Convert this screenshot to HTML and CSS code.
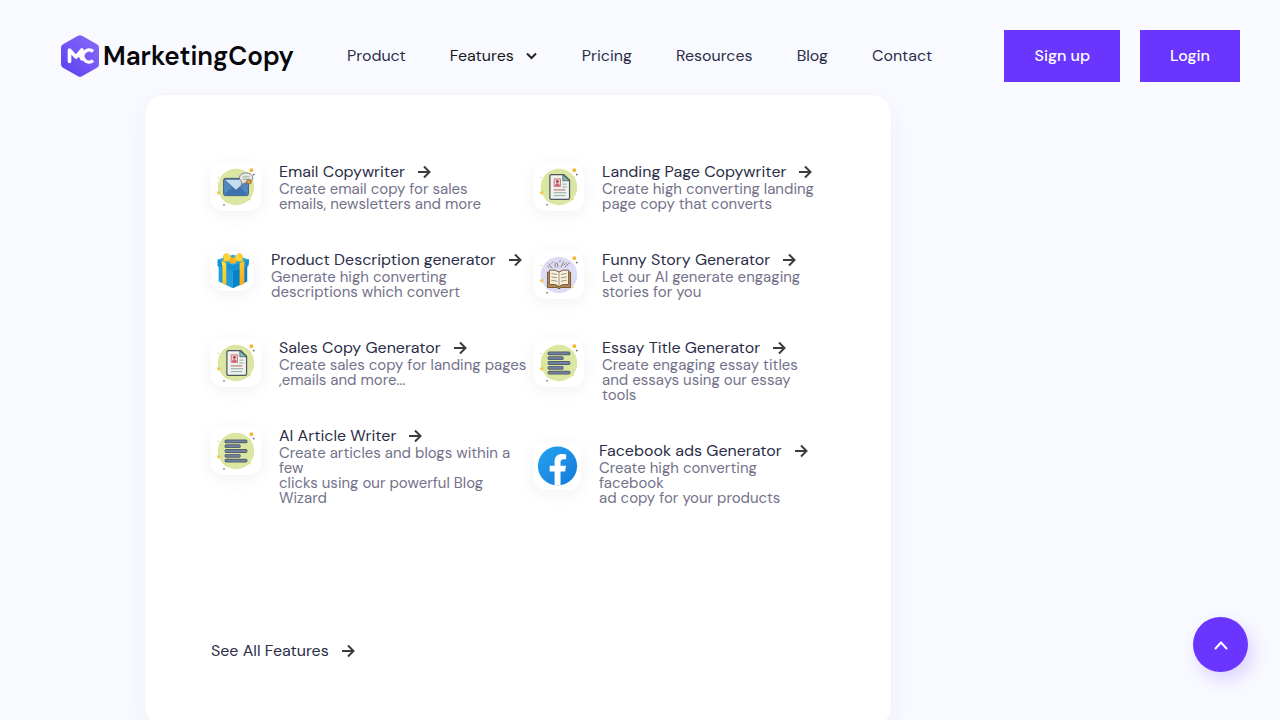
FILE: index.html
```html
<!DOCTYPE html>
<html lang="en">
<head>
<meta charset="utf-8">
<meta name="viewport" content="width=device-width, initial-scale=1">
<title>MarketingCopy</title>
<link rel="stylesheet" href="styles.css">
</head>
<body>
<svg class="sprite" aria-hidden="true">
  <defs>
    <linearGradient id="brand" x1="0" y1="1" x2="1" y2="0"><stop offset="0" stop-color="#5a3ff0"/><stop offset="1" stop-color="#8b6cf8"/></linearGradient>
    <linearGradient id="fb" x1="0" y1="0" x2="1" y2="1"><stop offset="0" stop-color="#24a4ee"/><stop offset="1" stop-color="#1478dc"/></linearGradient>
    <linearGradient id="ribbon" x1="0" y1="0" x2="1" y2="1"><stop offset="0" stop-color="#ffe33c"/><stop offset="1" stop-color="#f8a51b"/></linearGradient>
  </defs>
  <symbol id="arrow" viewBox="0 0 14 14"><path d="M1 7h11M7 1.500 12.500 7 7 12.500" fill="none" stroke="#3c3c40" stroke-width="2"/></symbol>
  <symbol id="dots" viewBox="0 0 50 50">
    <circle cx="41" cy="7.500" r="2" fill="#f2b632"/><circle cx="7" cy="31" r="1.800" fill="#f3c84c"/><circle cx="43.500" cy="12" r=".9" fill="#59637a"/><circle cx="12.500" cy="43.500" r=".9" fill="#59804e"/><circle cx="39.500" cy="38" r="1" fill="#f1d85b"/><circle cx="6.500" cy="15" r=".8" fill="#e4d77c"/>
  </symbol>
  <symbol id="document" viewBox="0 0 50 50">
    <circle cx="25" cy="25" r="19" fill="#dbe6a2"/><use href="#dots"/>
    <path d="M17 12h13l6 6v18.500a1.500 1.500 0 0 1-1.500 1.500H17a1.500 1.500 0 0 1-1.500-1.500v-23A1.500 1.500 0 0 1 17 12z" fill="#eef3f0" stroke="#4d565e" stroke-width="1.300"/>
    <path d="M29 12.500v6h6.500z" fill="#80c4b4" stroke="#4d565e" stroke-width=".8"/>
    <path d="M20 16.500h6.500v8H20z" fill="#f4d5d3" stroke="#c86a74" stroke-width=".9"/>
    <circle cx="23.300" cy="19.300" r="1.500" fill="#a84856"/><path d="M20.800 24c0-4 5-4 5 0z" fill="#c86a74"/>
    <path d="M28.500 22h4.500M28.500 25h4.500M19.500 31h13M19.500 34h12" stroke="#89a69d" stroke-width="1"/><path d="M19.500 28h12" stroke="#c48083" stroke-width="1.200"/>
  </symbol>
  <symbol id="article" viewBox="0 0 50 50">
    <circle cx="25" cy="25" r="19" fill="#dbe6a2"/><use href="#dots"/>
    <g stroke-linecap="round"><path d="M15 15h20M15 20h13M15 25h20M15 30h13M15 35h20" stroke="#555e68" stroke-width="4"/><path d="M15 15h20M15 20h13M15 25h20M15 30h13M15 35h20" stroke="#7083a0" stroke-width="2"/></g>
  </symbol>
</svg>

<header class="header">
  <a class="brand" href="#">
    <svg class="brand-mark" viewBox="0 0 38 42" aria-hidden="true"><path d="M17 .8q2-1.200 4 0l15 8.400q2 1.200 2 3.300v17q0 2.100-2 3.300l-15 8.400q-2 1.200-4 0L2 32.800q-2-1.200-2-3.300v-17q0-2.100 2-3.300z" fill="url(#brand)"/><path d="M8.500 26.500V15l6.500 7 6-7v9" fill="none" stroke="#fff" stroke-width="3.600" stroke-linejoin="round" stroke-linecap="round"/><path d="M32 16.500a6 6 0 1 0 0 9M18.500 23l4-4" fill="none" stroke="#fff" stroke-width="3.400" stroke-linejoin="round"/></svg>
    <span>MarketingCopy</span>
  </a>
  <nav class="nav" aria-label="Main">
    <a href="#">Product</a>
    <a class="active" href="#">Features <svg class="chevron" viewBox="0 0 13 8" aria-hidden="true"><path d="m2 1.500 4.500 4.500L11 1.500" fill="none" stroke="#222" stroke-width="2"/></svg></a>
    <a href="#">Pricing</a>
    <a href="#">Resources</a>
    <a href="#">Blog</a>
    <a href="#">Contact</a>
  </nav>
  <div class="actions"><a class="button" href="#">Sign up</a><a class="button" href="#">Login</a></div>
</header>

<section class="mega" aria-label="Features">
  <div class="columns">
    <div class="column">
      <a class="feature" href="#">
        <svg class="icon" viewBox="0 0 50 50" aria-hidden="true"><circle cx="25" cy="25" r="19" fill="#dbe6a2"/><use href="#dots"/><rect x="12" y="16" width="26" height="18" rx="2" fill="#5187bf" stroke="#465f82"/><path d="m12.500 33 9.500-9h6l9.500 9z" fill="#3c72ad"/><path d="m12.500 17 12.500 11.500L37.500 17z" fill="#c5ddf2" stroke="#465f82" stroke-width=".8"/><path d="M28.500 15.500c0-7 14-7 14 0 0 4-4 5-8 5l-4 2 .5-3.500q-2.500-1-2.500-3.500z" fill="#e6e5de" stroke="#7c8289"/><path d="M32 14.500h7M32 17h6" stroke="#8d9399" stroke-width=".8"/><circle cx="38.500" cy="19.500" r="2.500" fill="#e49b32" stroke="#80663e" stroke-width=".8"/></svg>
        <div><h3>Email Copywriter <svg class="arrow"><use href="#arrow"/></svg></h3><p>Create email copy for sales<br>emails, newsletters and more</p></div>
      </a>
      <a class="feature" href="#">
        <svg class="icon icon-small" viewBox="0 0 42 42" aria-hidden="true"><path d="m7 14 15 4v21L7 32z" fill="#209ddb"/><path d="m22 18 15-4v18l-15 7z" fill="#0781c6"/><path d="M6 9 22 4l17 5-1 7-16 5-16-5z" fill="#28acdf"/><path d="m6 9 16 6 17-6-1 7-16 5-16-5z" fill="#1692d2"/><path d="m10 10.500 5 2V36l-4-2V17zM29 12.500l5-2V34l-5 2.500z" fill="url(#ribbon)"/><path d="M22 10C19 3 13 0 12 6v5l10-1 10 1V6c-1-6-7-3-10 4z" fill="#fcd536" stroke="#f1b322" stroke-width=".8"/><path d="M19 7h6v6h-6z" fill="#ffb421"/></svg>
        <div><h3>Product Description generator <svg class="arrow"><use href="#arrow"/></svg></h3><p>Generate high converting<br>descriptions which convert</p></div>
      </a>
      <a class="feature" href="#">
        <svg class="icon" aria-hidden="true"><use href="#document"/></svg>
        <div><h3>Sales Copy Generator <svg class="arrow"><use href="#arrow"/></svg></h3><p>Create sales copy for landing pages<br>,emails and more...</p></div>
      </a>
      <a class="feature" href="#">
        <svg class="icon" aria-hidden="true"><use href="#article"/></svg>
        <div><h3>AI Article Writer <svg class="arrow"><use href="#arrow"/></svg></h3><p>Create articles and blogs within a<br>few<br>clicks using our powerful Blog<br>Wizard</p></div>
      </a>
    </div>
    <div class="column">
      <a class="feature" href="#">
        <svg class="icon" aria-hidden="true"><use href="#document"/></svg>
        <div><h3>Landing Page Copywriter <svg class="arrow"><use href="#arrow"/></svg></h3><p>Create high converting landing<br>page copy that converts</p></div>
      </a>
      <a class="feature" href="#">
        <svg class="icon" viewBox="0 0 50 50" aria-hidden="true"><circle cx="25" cy="25" r="19" fill="#dedbf5"/><use href="#dots"/><path d="M13 22h24v16H27l-2 1.500L23 38H13z" fill="#b98a50" stroke="#765638"/><path d="M15 20q7-1 10 2 3-3 10-2v15q-7-1-10 2-3-3-10-2z" fill="#f6f1dd" stroke="#765638"/><path d="M25 22v14M17 23.500l6 1M17 27l6 1M17 30.500l6 1M33 23.500l-6 1M33 27l-6 1M33 30.500l-6 1" stroke="#98866e" stroke-width=".9"/><path d="m18 18-4-5M21 17v-5M24 17l-1-5M27 17l3-6M31 17l5-5M15 17l-2-1M17 13l2-2M25 11l2-1M33 12l-3 3" stroke="#77716d" stroke-width=".9"/></svg>
        <div><h3>Funny Story Generator <svg class="arrow"><use href="#arrow"/></svg></h3><p>Let our AI generate engaging<br>stories for you</p></div>
      </a>
      <a class="feature" href="#">
        <svg class="icon" aria-hidden="true"><use href="#article"/></svg>
        <div><h3>Essay Title Generator <svg class="arrow"><use href="#arrow"/></svg></h3><p>Create engaging essay titles<br>and essays using our essay<br>tools</p></div>
      </a>
      <a class="feature" href="#">
        <svg class="icon icon-medium" viewBox="0 0 48 48" aria-hidden="true"><circle cx="24" cy="24" r="20" fill="url(#fb)"/><path d="M21 43.800V29.500h-5v-5.700h5v-4.400c0-5 3-7.700 7.500-7.700q2.200 0 4.300.4v5h-2.500c-2.500 0-3.200 1.500-3.200 3.200v3.500h5.600l-.9 5.700h-4.700v14.300q-3 .4-6.100 0z" fill="#fff"/></svg>
        <div><h3>Facebook ads Generator <svg class="arrow"><use href="#arrow"/></svg></h3><p>Create high converting<br>facebook<br>ad copy for your products</p></div>
      </a>
    </div>
  </div>
  <a class="see-all" href="#">See All Features <svg class="arrow"><use href="#arrow"/></svg></a>
</section>

<button class="to-top" type="button" aria-label="Back to top"><svg viewBox="0 0 14 10" aria-hidden="true"><path d="m1.500 8.500 5.500-6 5.500 6" fill="none" stroke="#fff" stroke-width="2" stroke-linecap="round"/></svg></button>
</body>
</html>
```
FILE: styles.css
```css
* { box-sizing: border-box; }
body {
  margin: 0;
  min-height: 100vh;
  overflow: hidden;
  background: #f9faff;
  color: #2b2e48;
  font: 400 16px/18px "DM Sans", Inter, sans-serif;
}
a { color: inherit; text-decoration: none; }
h3, p { margin: 0; }
svg { flex: none; }
.sprite { position: absolute; width: 0; height: 0; }

.header {
  display: flex;
  align-items: center;
  padding: 30px 40px 30px 61px;
}
.brand {
  display: flex;
  align-items: center;
  gap: 4px;
  width: 286px;
  color: #08080c;
  font-size: 26px;
  font-weight: 600;
  line-height: 32px;
}
.brand-mark { width: 38px; height: 42px; }
.nav { display: flex; gap: 44px; }
.nav a { display: flex; align-items: center; gap: 11px; }
.nav .active { color: #17171b; }
.chevron { width: 13px; height: 8px; }
.actions { display: flex; gap: 20px; margin-left: auto; }
.button {
  padding: 17px 30px;
  background: #6a35ff;
  color: #fff;
  font-weight: 500;
}

.mega {
  position: absolute;
  top: 94px;
  left: 144px;
  padding: 68px 66px 66px;
  border: 1px solid #f4f5fa;
  border-radius: 20px;
  background: #fff;
  box-shadow: 0 10px 24px rgba(50, 50, 110, 0.05);
}
.columns { display: grid; grid-template-columns: 316px 291px; gap: 7px; }
.column { display: flex; flex-direction: column; gap: 39px; }
.feature { display: flex; align-items: flex-start; gap: 18px; white-space: nowrap; }
.icon {
  width: 50px;
  height: 48px;
  border-radius: 12px;
  background: #fff;
  box-shadow: 0 4px 18px rgba(40, 40, 70, 0.06);
}
.icon-small { width: 42px; height: 40px; }
.icon-medium { width: 47px; }
.feature h3, .see-all {
  display: flex;
  align-items: center;
  gap: 12px;
  font-size: 16px;
  font-weight: 400;
  line-height: 18px;
}
.arrow { width: 14px; height: 14px; }
.feature p { margin-top: 1px; color: #74728b; font-size: 15px; line-height: 15px; }
.see-all { width: max-content; margin-top: 136px; }

.to-top {
  position: fixed;
  right: 32px;
  bottom: 48px;
  display: grid;
  place-items: center;
  width: 55px;
  height: 55px;
  padding: 0;
  border: 0;
  border-radius: 50%;
  background: #6a35ff;
  box-shadow: 5px 8px 18px rgba(106, 53, 255, 0.2);
}
.to-top svg { width: 14px; height: 10px; }
```
